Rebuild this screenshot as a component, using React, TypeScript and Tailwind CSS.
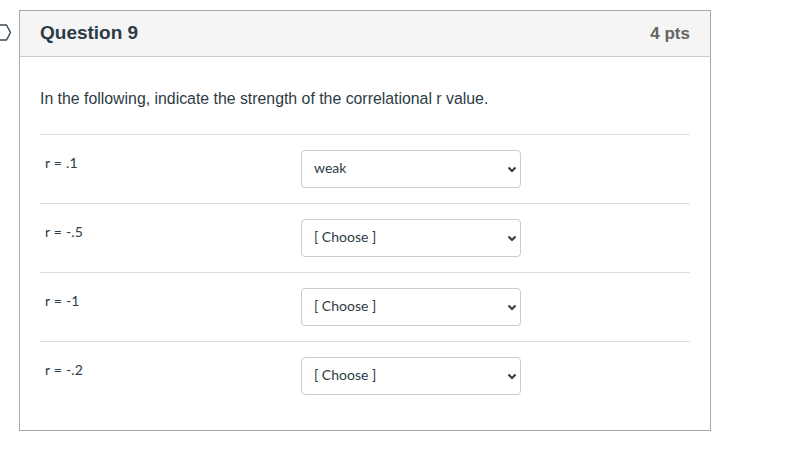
import React from "react";

const rows = [
  { label: "r = .1", value: "weak" },
  { label: "r = -.5", value: "[ Choose ]" },
  { label: "r = -1", value: "[ Choose ]" },
  { label: "r = -.2", value: "[ Choose ]" },
];

function Select({ value }: { value: string }) {
  return (
    <div className="relative w-[220px] h-[38px] rounded-[4px] border border-[#c7cdd1] bg-white flex items-center pl-[12px] pb-[3px] text-[14px] text-[#2d3b45] font-['Lato','Noto_Sans',sans-serif]">
      <span>{value}</span>
      <svg
        className="absolute right-[3px] top-[15px]"
        width="10"
        height="7"
        viewBox="0 0 10 7"
      >
        <path d="M1.5 1.5 L5 5 L8.5 1.5" fill="none" stroke="#2d3b45" strokeWidth="2" />
      </svg>
    </div>
  );
}

export default function App() {
  return (
    <div className="relative w-[798px] h-[454px] bg-white overflow-hidden pt-[10px]">
      <svg className="absolute left-0 top-[23px]" width="12" height="19" viewBox="0 0 12 19">
        <path d="M-5 2 H6.5 L10.5 9.5 L6.5 17 H-5" fill="none" stroke="#3b4a5a" strokeWidth="1.5" strokeLinejoin="round" />
      </svg>
      <div className="ml-[19px] w-[692px] h-[421px] border border-[#a8a8a8] flex flex-col">
        <div className="h-[46px] bg-[#f5f5f5] border-b border-[#c7cdd1] px-[20px] flex items-center justify-between font-['Liberation_Sans',Arial,sans-serif] font-bold">
          <span className="text-[19px] text-[#2d3b45]">Question 9</span>
          <span className="text-[17px] text-[#666666]">4 pts</span>
        </div>
        <div className="px-[20px] pt-[30px]">
          <p className="text-[15.85px] leading-[24px] text-[#2d3b45] font-['Liberation_Sans',Arial,sans-serif]">
            In the following, indicate the strength of the correlational r value.
          </p>
          <div className="mt-[23px]">
            {rows.map((r) => (
              <div key={r.label} className="border-t border-[#dcdfe1] pt-[15px] pb-[15px] flex">
                <div className="w-[261px] pl-[5px] pt-[3px] text-[14px] leading-[20px] tracking-[0.2px] text-[#2d3b45] font-['Lato','Noto_Sans',sans-serif]">
                  {r.label}
                </div>
                <Select value={r.value} />
              </div>
            ))}
          </div>
        </div>
      </div>
    </div>
  );
}
